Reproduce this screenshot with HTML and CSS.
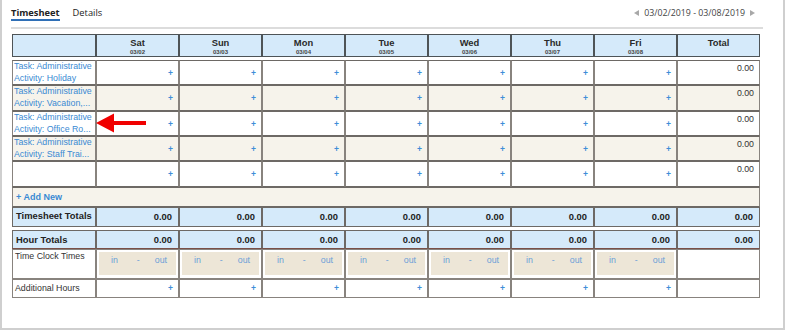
FILE: index.html
```html
<!DOCTYPE html>
<html>
<head>
<meta charset="utf-8">
<link rel="stylesheet" href="styles.css">
</head>
<body>
<div class="frame">
  <div class="topbar">
    <div class="tabs">
      <span class="tab active">Timesheet</span>
      <span class="tab">Details</span>
    </div>
    <div class="range">
      <span class="tri tri-left"></span>
      <span class="range-text">03/02/2019 - 03/08/2019</span>
      <span class="tri tri-right"></span>
    </div>
  </div>

  <div class="sheet">
    <table class="grid head">
      <colgroup><col class="c-first"><col><col><col><col><col><col><col><col></colgroup>
      <tr>
        <td></td>
        <td><div class="day">Sat</div><div class="date">03/02</div></td>
        <td><div class="day">Sun</div><div class="date">03/03</div></td>
        <td><div class="day">Mon</div><div class="date">03/04</div></td>
        <td><div class="day">Tue</div><div class="date">03/05</div></td>
        <td><div class="day">Wed</div><div class="date">03/06</div></td>
        <td><div class="day">Thu</div><div class="date">03/07</div></td>
        <td><div class="day">Fri</div><div class="date">03/08</div></td>
        <td><div class="day">Total</div></td>
      </tr>
    </table>

    <table class="grid body">
      <colgroup><col class="c-first"><col><col><col><col><col><col><col><col></colgroup>
      <tr class="r1">
        <td class="label"><span class="ln">Task: Administrative</span><span class="ln">Activity: Holiday</span></td>
        <td class="plus">+</td><td class="plus">+</td><td class="plus">+</td><td class="plus">+</td><td class="plus">+</td><td class="plus">+</td><td class="plus">+</td>
        <td class="tot">0.00</td>
      </tr>
      <tr class="r2 alt">
        <td class="label"><span class="ln">Task: Administrative</span><span class="ln">Activity: Vacation,...</span></td>
        <td class="plus">+</td><td class="plus">+</td><td class="plus">+</td><td class="plus">+</td><td class="plus">+</td><td class="plus">+</td><td class="plus">+</td>
        <td class="tot">0.00</td>
      </tr>
      <tr class="r3">
        <td class="label"><span class="ln">Task: Administrative</span><span class="ln">Activity: Office Ro...</span></td>
        <td class="plus">+</td><td class="plus">+</td><td class="plus">+</td><td class="plus">+</td><td class="plus">+</td><td class="plus">+</td><td class="plus">+</td>
        <td class="tot">0.00</td>
      </tr>
      <tr class="r4 alt">
        <td class="label"><span class="ln">Task: Administrative</span><span class="ln">Activity: Staff Trai...</span></td>
        <td class="plus">+</td><td class="plus">+</td><td class="plus">+</td><td class="plus">+</td><td class="plus">+</td><td class="plus">+</td><td class="plus">+</td>
        <td class="tot">0.00</td>
      </tr>
      <tr class="r5">
        <td class="label"></td>
        <td class="plus">+</td><td class="plus">+</td><td class="plus">+</td><td class="plus">+</td><td class="plus">+</td><td class="plus">+</td><td class="plus">+</td>
        <td class="tot">0.00</td>
      </tr>
      <tr class="addrow">
        <td colspan="9"><span class="addnew">+ Add New</span></td>
      </tr>
      <tr class="totals">
        <td class="tlabel">Timesheet Totals</td>
        <td>0.00</td><td>0.00</td><td>0.00</td><td>0.00</td><td>0.00</td><td>0.00</td><td>0.00</td><td>0.00</td>
      </tr>
    </table>

    <table class="grid lower">
      <colgroup><col class="c-first"><col><col><col><col><col><col><col><col></colgroup>
      <tr class="totals hours">
        <td class="tlabel">Hour Totals</td>
        <td>0.00</td><td>0.00</td><td>0.00</td><td>0.00</td><td>0.00</td><td>0.00</td><td>0.00</td><td>0.00</td>
      </tr>
      <tr class="clock">
        <td class="plain">Time Clock Times</td>
        <td><div class="box"><span>in</span><span class="dash">-</span><span class="out">out</span></div></td>
        <td><div class="box"><span>in</span><span class="dash">-</span><span class="out">out</span></div></td>
        <td><div class="box"><span>in</span><span class="dash">-</span><span class="out">out</span></div></td>
        <td><div class="box"><span>in</span><span class="dash">-</span><span class="out">out</span></div></td>
        <td><div class="box"><span>in</span><span class="dash">-</span><span class="out">out</span></div></td>
        <td><div class="box"><span>in</span><span class="dash">-</span><span class="out">out</span></div></td>
        <td><div class="box"><span>in</span><span class="dash">-</span><span class="out">out</span></div></td>
        <td></td>
      </tr>
      <tr class="extra">
        <td class="plain">Additional Hours</td>
        <td class="plus">+</td><td class="plus">+</td><td class="plus">+</td><td class="plus">+</td><td class="plus">+</td><td class="plus">+</td><td class="plus">+</td>
        <td></td>
      </tr>
    </table>

    <svg class="arrow" width="52" height="22" viewBox="0 0 52 22">
      <polygon points="0,11 18,1.5 18,9 50,9 50,13 18,13 18,20.5" fill="#f00000"/>
    </svg>
  </div>
</div>
</body>
</html>
```

FILE: styles.css
```css
html, body {
  margin: 0;
  padding: 0;
  background: #fff;
}

.frame {
  box-sizing: border-box;
  width: 785px;
  height: 330px;
  border-left: 2px solid #cfcfcf;
  border-right: 2px solid #cfcfcf;
  border-bottom: 2px solid #cfcfcf;
  padding-left: 9px;
  font-family: "Liberation Sans", Arial, sans-serif;
}

.topbar {
  box-sizing: border-box;
  width: 752px;
  height: 29px;
  border-bottom: 2px solid #dcdcdc;
  display: flex;
  justify-content: space-between;
  align-items: flex-start;
  font-family: "Open Sans", sans-serif;
}

.tabs {
  display: flex;
  gap: 13px;
  padding-top: 6px;
}

.tab {
  font-size: 9.3px;
  color: #222;
  line-height: 13px;
}

.tab.active {
  font-weight: 700;
  border-bottom: 2px solid #2f6fb6;
}

.range {
  display: flex;
  align-items: center;
  gap: 5px;
  padding-top: 7px;
  padding-right: 8px;
  color: #444;
}

.range-text {
  font-size: 8.8px;
  line-height: 12px;
}

.tri {
  width: 0;
  height: 0;
  border-top: 3.5px solid transparent;
  border-bottom: 3.5px solid transparent;
}

.tri-left {
  border-right: 5px solid #a8a8a8;
}

.tri-right {
  border-left: 5px solid #a8a8a8;
}

.sheet {
  position: relative;
  padding-top: 5px;
  padding-left: 1px;
  display: flex;
  flex-direction: column;
}

.grid {
  table-layout: fixed;
  width: 748px;
  border-collapse: separate;
  border-spacing: 0;
  font-family: "Liberation Sans", Arial, sans-serif;
}

.grid col {
  width: 83px;
}

.grid col.c-first {
  width: 84px;
}

.grid td {
  box-sizing: border-box;
  border: 1px solid #88837e;
  padding: 0;
  font-size: 8.8px;
  color: #333;
  overflow: hidden;
}

/* header */
.head td {
  height: 23px;
  background: #d5eafa;
  border-color: #4e5457;
  vertical-align: top;
  text-align: center;
  padding-top: 2px;
}

.day {
  font-weight: 700;
  font-size: 9.4px;
  line-height: 11px;
  color: #2a2a2a;
}

.date {
  font-weight: 700;
  font-size: 6px;
  line-height: 8px;
  color: #444;
}

.body {
  margin-top: 3px;
}

.body tr.r1 td { height: 25px; }
.body tr.r2 td { height: 26px; }
.body tr.r3 td { height: 25px; }
.body tr.r4 td { height: 25px; }
.body tr.r5 td { height: 26px; }

.body tr td {
  border-top-color: #6d6965;
  border-bottom-color: #6d6965;
}

.body tr.alt td {
  background: #f6f3eb;
}

.label {
  vertical-align: top;
  padding: 0 0 0 1px !important;
}

.ln {
  display: block;
  white-space: nowrap;
  overflow: hidden;
  line-height: 11.5px;
  color: #3a8ad3;
  font-size: 8.8px;
}

.plus {
  text-align: right;
  padding-right: 5px !important;
  vertical-align: middle;
  color: #3d8ed8 !important;
  font-weight: 700;
  font-size: 8.5px !important;
}

.tot {
  text-align: right;
  vertical-align: top;
  padding: 2px 5px 0 0 !important;
  color: #333;
}

.addrow td {
  height: 20px;
  background: #f6f3eb;
  vertical-align: middle;
  padding-left: 3px !important;
}

.addnew {
  color: #3a8ad3;
  font-weight: 700;
  font-size: 9px;
}

.totals td {
  height: 20px;
  background: #d5eafa;
  font-weight: 700;
  font-size: 9.4px;
  color: #222;
  text-align: right;
  vertical-align: top;
  padding: 3px 6px 0 0;
  border-color: #6d6965;
}

.totals td.tlabel {
  text-align: left;
  padding: 2px 0 0 3px;
}

.lower {
  margin-top: 3px;
}

.hours td {
  height: 19px;
  padding-top: 3px;
  border-bottom-color: #7a5048;
}

.hours td.tlabel {
  padding-top: 3px;
}

.clock td {
  height: 30px;
  vertical-align: top;
  padding: 2px 2px 0 2px;
}

.plain {
  vertical-align: top;
  padding: 1px 0 0 2px !important;
  color: #333;
}

.box {
  box-sizing: border-box;
  height: 23px;
  background: #ede6d7;
  display: flex;
  align-items: flex-start;
  padding: 3px 0 0 12px;
  color: #6b9fd8;
  font-size: 8.8px;
  line-height: 11px;
}

.box .dash {
  margin-left: 19px;
}

.box .out {
  margin-left: 15px;
}

.extra td {
  height: 19px;
}

.extra td.plus {
  vertical-align: top;
  padding-top: 3px !important;
}

.extra td.plain {
  padding-top: 3px !important;
}

.arrow {
  position: absolute;
  left: 85px;
  top: 83px;
}
```
